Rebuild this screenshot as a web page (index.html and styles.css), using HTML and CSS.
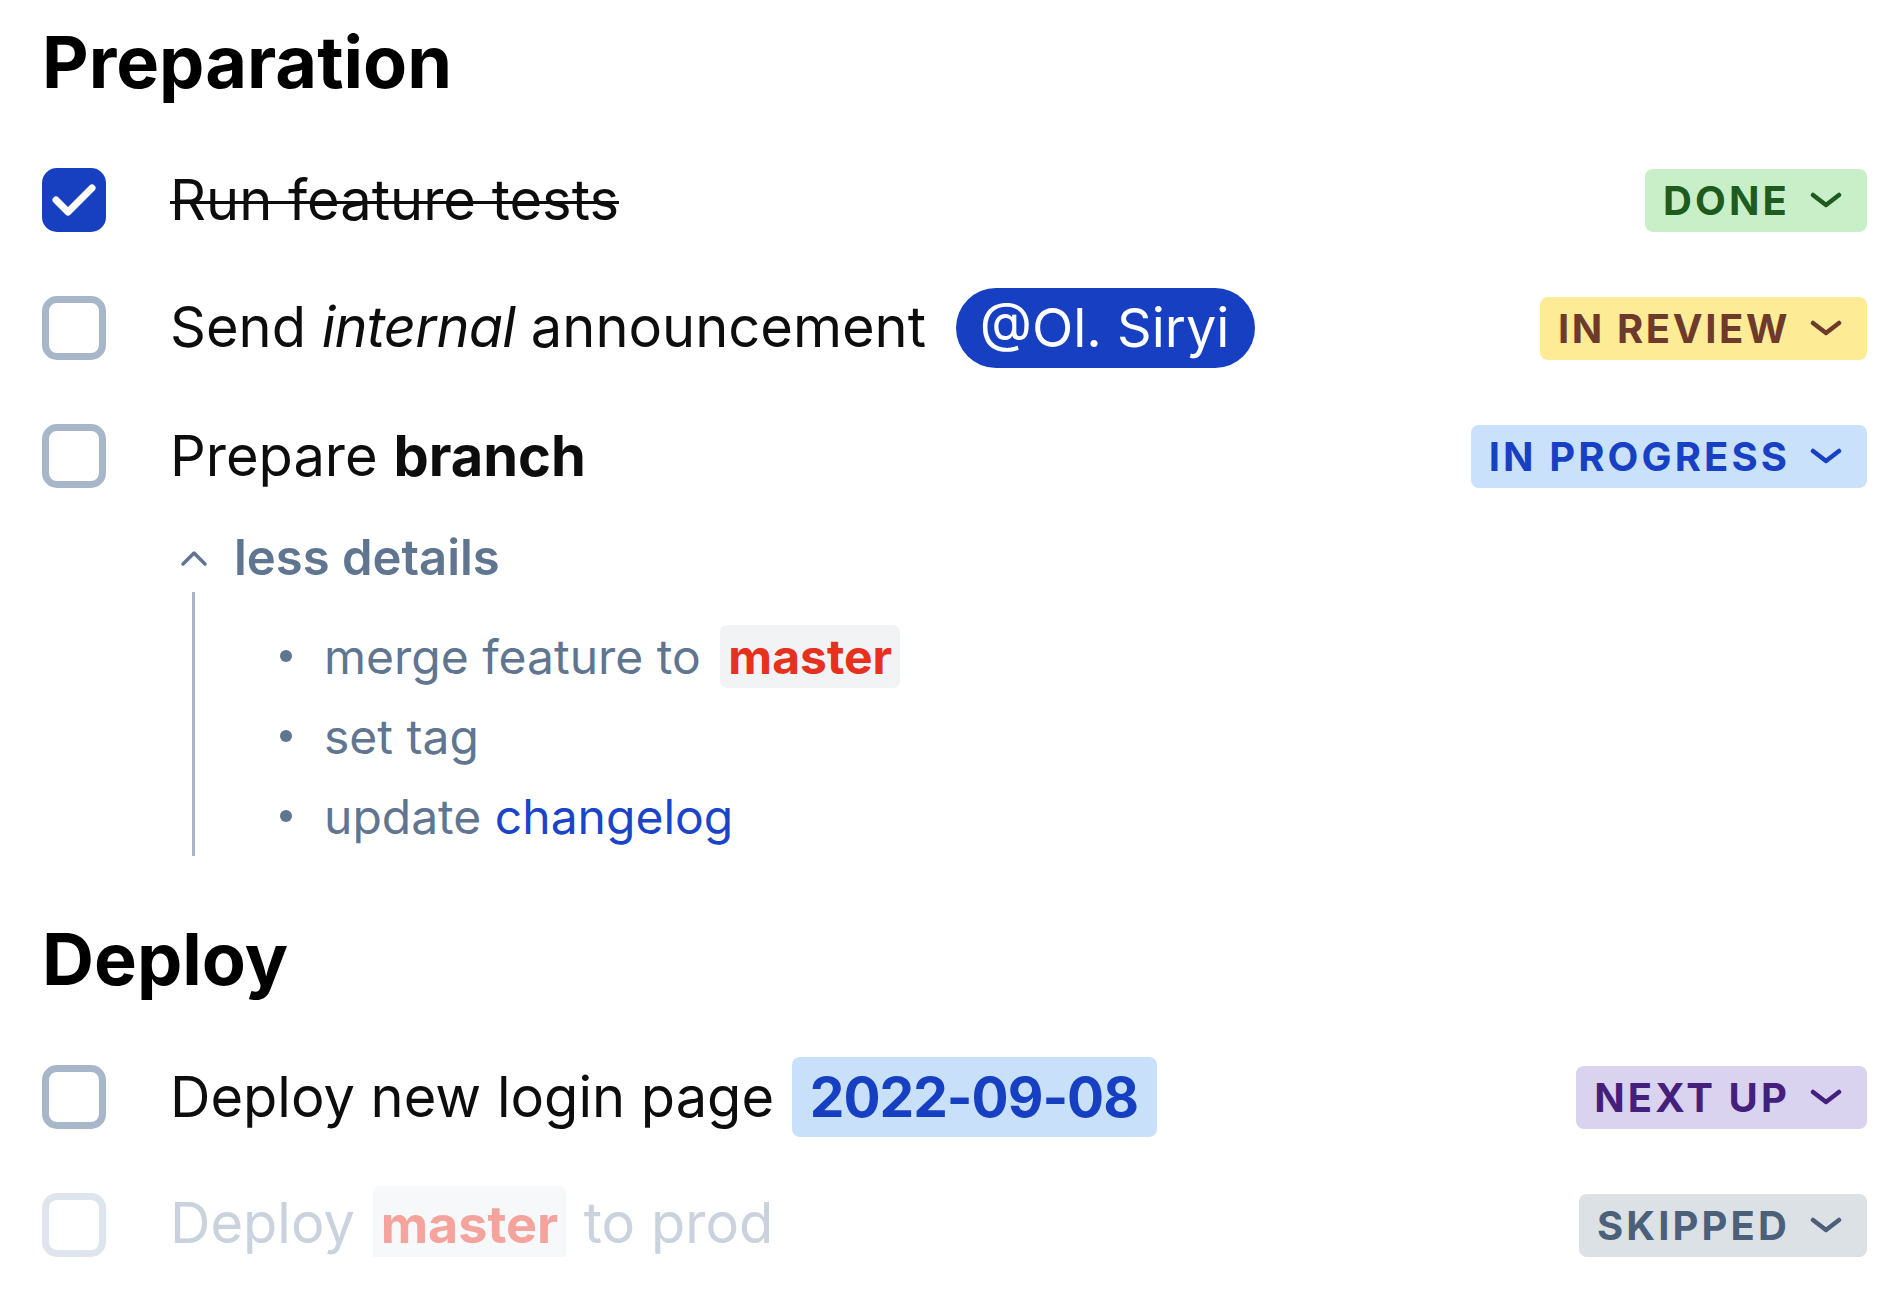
FILE: index.html
```html
<!DOCTYPE html>
<html lang="en">
<head>
<meta charset="utf-8">
<title>Checklist</title>
<link rel="stylesheet" href="styles.css">
</head>
<body>
<main class="page">
  <section class="group">
    <h2 class="group-title">Preparation</h2>
    <ul class="tasks">
      <li class="task">
        <div class="task-row">
          <span class="checkbox is-checked">
            <svg viewBox="0 0 64 64" width="64" height="64"><polyline points="14,32 26,44 50,20" fill="none" stroke="#fff" stroke-width="7" stroke-linecap="round" stroke-linejoin="round"/></svg>
          </span>
          <span class="task-text is-done">Run feature tests</span>
          <span class="status status-done">DONE
            <svg class="chev" viewBox="0 0 32 16" width="32" height="16"><polyline points="3,3 16,13 29,3" fill="none" stroke="currentColor" stroke-width="4.5" stroke-linecap="round" stroke-linejoin="round"/></svg>
          </span>
        </div>
      </li>
      <li class="task">
        <div class="task-row">
          <span class="checkbox"></span>
          <span class="task-text">Send <em>internal</em> announcement <span class="mention">@Ol. Siryi</span></span>
          <span class="status status-review">IN REVIEW
            <svg class="chev" viewBox="0 0 32 16" width="32" height="16"><polyline points="3,3 16,13 29,3" fill="none" stroke="currentColor" stroke-width="4.5" stroke-linecap="round" stroke-linejoin="round"/></svg>
          </span>
        </div>
      </li>
      <li class="task">
        <div class="task-row">
          <span class="checkbox"></span>
          <span class="task-text">Prepare <strong>branch</strong></span>
          <span class="status status-progress">IN PROGRESS
            <svg class="chev" viewBox="0 0 32 16" width="32" height="16"><polyline points="3,3 16,13 29,3" fill="none" stroke="currentColor" stroke-width="4.5" stroke-linecap="round" stroke-linejoin="round"/></svg>
          </span>
        </div>
        <div class="details">
          <div class="details-toggle">
            <svg class="caret" viewBox="0 0 28 18" width="28" height="18"><polyline points="3,15 14,4 25,15" fill="none" stroke="currentColor" stroke-width="3.5" stroke-linecap="round" stroke-linejoin="round"/></svg>
            <span>less details</span>
          </div>
          <ul class="details-list">
            <li><span class="bullet"></span><span>merge feature to <code class="branch">master</code></span></li>
            <li><span class="bullet"></span><span>set tag</span></li>
            <li><span class="bullet"></span><span>update <a class="link" href="#">changelog</a></span></li>
          </ul>
        </div>
      </li>
    </ul>
  </section>

  <section class="group group-next">
    <h2 class="group-title">Deploy</h2>
    <ul class="tasks">
      <li class="task">
        <div class="task-row">
          <span class="checkbox"></span>
          <span class="task-text">Deploy new login page <span class="date">2022-09-08</span></span>
          <span class="status status-next">NEXT UP
            <svg class="chev" viewBox="0 0 32 16" width="32" height="16"><polyline points="3,3 16,13 29,3" fill="none" stroke="currentColor" stroke-width="4.5" stroke-linecap="round" stroke-linejoin="round"/></svg>
          </span>
        </div>
      </li>
      <li class="task is-skipped">
        <div class="task-row">
          <span class="checkbox"></span>
          <span class="task-text">Deploy <code class="branch branch-lg">master</code> to prod</span>
          <span class="status status-skipped">SKIPPED
            <svg class="chev" viewBox="0 0 32 16" width="32" height="16"><polyline points="3,3 16,13 29,3" fill="none" stroke="currentColor" stroke-width="4.5" stroke-linecap="round" stroke-linejoin="round"/></svg>
          </span>
        </div>
      </li>
    </ul>
  </section>
</main>
</body>
</html>
```
FILE: styles.css
```css
* { box-sizing: border-box; }

html, body {
  margin: 0;
  padding: 0;
  background: #ffffff;
}

body {
  font-family: Inter, "Noto Sans", "Liberation Sans", sans-serif;
  color: #0d0d0d;
}

.page {
  padding: 0 33px 0 42px;
}

.group-title {
  margin: 20px 0 0;
  font-size: 72px;
  line-height: 84px;
  font-weight: 700;
  color: #000;
}

.group-next .group-title {
  margin-top: 61px;
}

.tasks {
  list-style: none;
  margin: 64px 0 0;
  padding: 0;
  display: flex;
  flex-direction: column;
  gap: 64px;
}

.task-row {
  height: 64px;
  display: flex;
  align-items: center;
  gap: 64px;
}

.checkbox {
  flex: 0 0 64px;
  width: 64px;
  height: 64px;
  border: 7px solid #a8b6ca;
  border-radius: 15px;
  background: #fff;
  display: flex;
}

.checkbox.is-checked {
  border: none;
  background: #1740c1;
}

.task-text {
  flex: 1 1 auto;
  font-size: 56px;
  white-space: nowrap;
}

.task-text.is-done {
  text-decoration: line-through;
  text-decoration-thickness: 3px;
}

.task-text strong { font-weight: 700; }
.task-text em { font-style: italic; letter-spacing: -0.8px; }

.mention {
  display: inline-block;
  margin-left: 14px;
  padding: 0 26px 0 24px;
  line-height: 80px;
  border-radius: 40px;
  background: #173fc2;
  color: #fff;
  font-size: 54px;
}

.date {
  display: inline-block;
  margin-left: 2px;
  padding: 0 19px 0 18px;
  line-height: 80px;
  border-radius: 8px;
  background: #c9e0fa;
  color: #173fc2;
  font-size: 55px;
  font-weight: 700;
  letter-spacing: -1px;
}

.branch {
  display: inline-block;
  margin-left: 6px;
  padding: 0 8px;
  line-height: 63px;
  border-radius: 7px;
  background: #f1f3f5;
  color: #e5311d;
  font-family: inherit;
  font-weight: 700;
}

.branch-lg {
  font-size: 52px;
  line-height: 78px;
  margin-left: 2px;
  margin-right: 2px;
}

.status {
  margin-left: auto;
  flex: 0 0 auto;
  height: 63px;
  display: inline-flex;
  align-items: center;
  gap: 20px;
  padding: 0 25px 0 18px;
  border-radius: 8px;
  font-size: 40px;
  font-weight: 700;
  letter-spacing: 3.1px;
  white-space: nowrap;
}

.status-review { letter-spacing: 2.6px; }

.chev { display: block; }

.status-done { background: #c9efc8; color: #1e5b1e; }
.status-review { background: #fdeb95; color: #6d3a2b; }
.status-progress { background: #cae1fb; color: #1740c4; }
.status-next { background: #d9d3ef; color: #44207c; }
.status-skipped { background: #dce1e6; color: #4c6079; }

.is-skipped .checkbox { border-color: #dfe5ec; }
.is-skipped .task-text { color: #c9d2dd; }
.is-skipped .branch { background: #f7f8fa; color: #f5a49d; }

.details {
  margin: 40px 0 0 138px;
  color: #5f7590;
}

.details-toggle {
  display: flex;
  align-items: center;
  gap: 26px;
  font-size: 49px;
  font-weight: 600;
}

.caret { display: block; color: #5f7590; }

.details-list {
  list-style: none;
  margin: 5px 0 0 12px;
  padding: 24px 0 0;
  border-left: 3px solid #a9b6c8;
}

.details-list li {
  display: flex;
  align-items: center;
  gap: 32px;
  padding-left: 85px;
  height: 80px;
  font-size: 48px;
  white-space: nowrap;
}

.bullet {
  flex: 0 0 12px;
  width: 12px;
  height: 12px;
  border-radius: 50%;
  background: #5f7590;
}

.link {
  color: #1a45c9;
  text-decoration: none;
}
```
